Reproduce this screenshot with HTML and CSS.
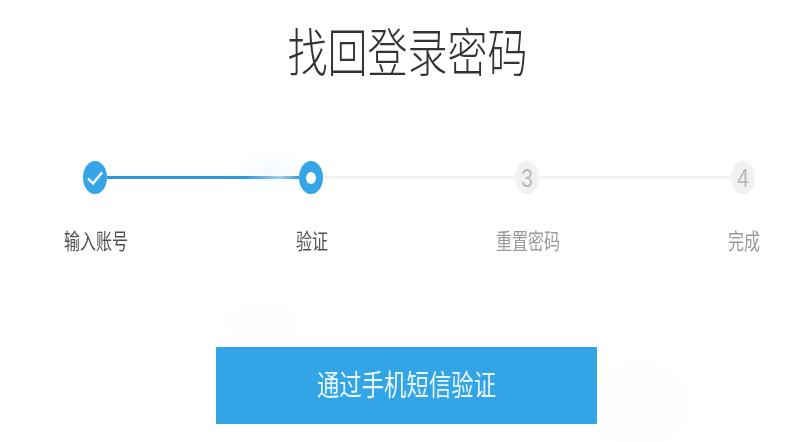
FILE: index.html
```html
<!DOCTYPE html>
<html lang="zh-CN">
<head>
<meta charset="utf-8">
<title>找回登录密码</title>
<link rel="stylesheet" href="styles.css">
</head>
<body>
<main class="page">
  <h1 class="title"><span class="stretch">找回登录密码</span></h1>
  <div class="track">
    <div class="node node-done">
      <svg class="check" viewBox="0 0 18 18" aria-hidden="true"><path d="M2 9.5 L7 14.5 L16 3.5" fill="none" stroke="#fff" stroke-width="2.4"/></svg>
    </div>
    <div class="line line-active"></div>
    <div class="node node-current"><span class="dot"></span></div>
    <div class="line"></div>
    <div class="node node-todo"><span class="num">3</span></div>
    <div class="line"></div>
    <div class="node node-todo"><span class="num">4</span></div>
  </div>
  <div class="labels">
    <span class="label label-dark">输入账号</span>
    <span class="label label-dark">验证</span>
    <span class="label">重置密码</span>
    <span class="label">完成</span>
  </div>
  <div class="action">
    <button class="button" type="button"><span class="stretch">通过手机短信验证</span></button>
  </div>
</main>
</body>
</html>
```
FILE: styles.css
```css
* { box-sizing: border-box; }
html, body { margin: 0; height: 100%; }
body {
  overflow: hidden;
  background:
    radial-gradient(ellipse 40px 24px at 272px 172px, rgba(228,240,248,.35), transparent),
    radial-gradient(ellipse 60px 50px at 640px 405px, rgba(232,240,246,.25), transparent),
    radial-gradient(ellipse 45px 22px at 262px 322px, rgba(236,243,248,.25), transparent),
    #fff;
  font-family: "Noto Sans CJK SC", "Noto Sans", sans-serif;
}
.page { width: 805px; height: 442px; padding-top: 20px; }
.stretch { display: inline-block; transform: scaleY(1.3); filter: blur(.3px); }
.title {
  margin: 0 0 0 10px;
  height: 61px;
  line-height: 61px;
  font-size: 40px;
  font-weight: 300;
  color: #333;
  text-align: center;
  white-space: nowrap;
}
.track {
  display: flex;
  align-items: center;
  width: 672px;
  height: 33px;
  margin: 80px 0 0 83px;
}
.node {
  flex: none;
  width: 24px;
  height: 33px;
  border-radius: 50%;
  display: flex;
  align-items: center;
  justify-content: center;
}
.node-done, .node-current { background: #35a5e8; }
.node-todo { background: #f1f1f1; }
.check { width: 18px; height: 18px; }
.dot { width: 10px; height: 12px; border-radius: 50%; background: #fff; }
.num {
  display: inline-block;
  font-family: "Liberation Sans", sans-serif;
  font-size: 21px;
  line-height: 1;
  color: #b8b8b8;
  transform: scaleY(1.25);
  filter: blur(.4px);
}
.line { flex: 1; height: 3px; background: #f2f2f2; }
.line-active { background: linear-gradient(90deg, #2f96d8 0, #2f96d8 72%, #9ccff0 90%, #3a9ddd 100%); }
.labels {
  display: flex;
  justify-content: space-between;
  width: 712px;
  margin: 34px 0 0 64px;
}
.label {
  width: 64px;
  text-align: center;
  font-size: 16px;
  line-height: 24px;
  color: #9a9a9a;
  transform: scaleY(1.32);
  filter: blur(.4px);
}
.label-dark { color: #505050; }
.action { margin: 95px 0 0 216px; }
.button {
  display: block;
  width: 381px;
  height: 77px;
  padding: 0 0 5px;
  border: 0;
  border-radius: 1px;
  background: #33a4e6;
  color: #eaf6fd;
  font-family: inherit;
  font-size: 22.4px;
  text-align: center;
}
```
